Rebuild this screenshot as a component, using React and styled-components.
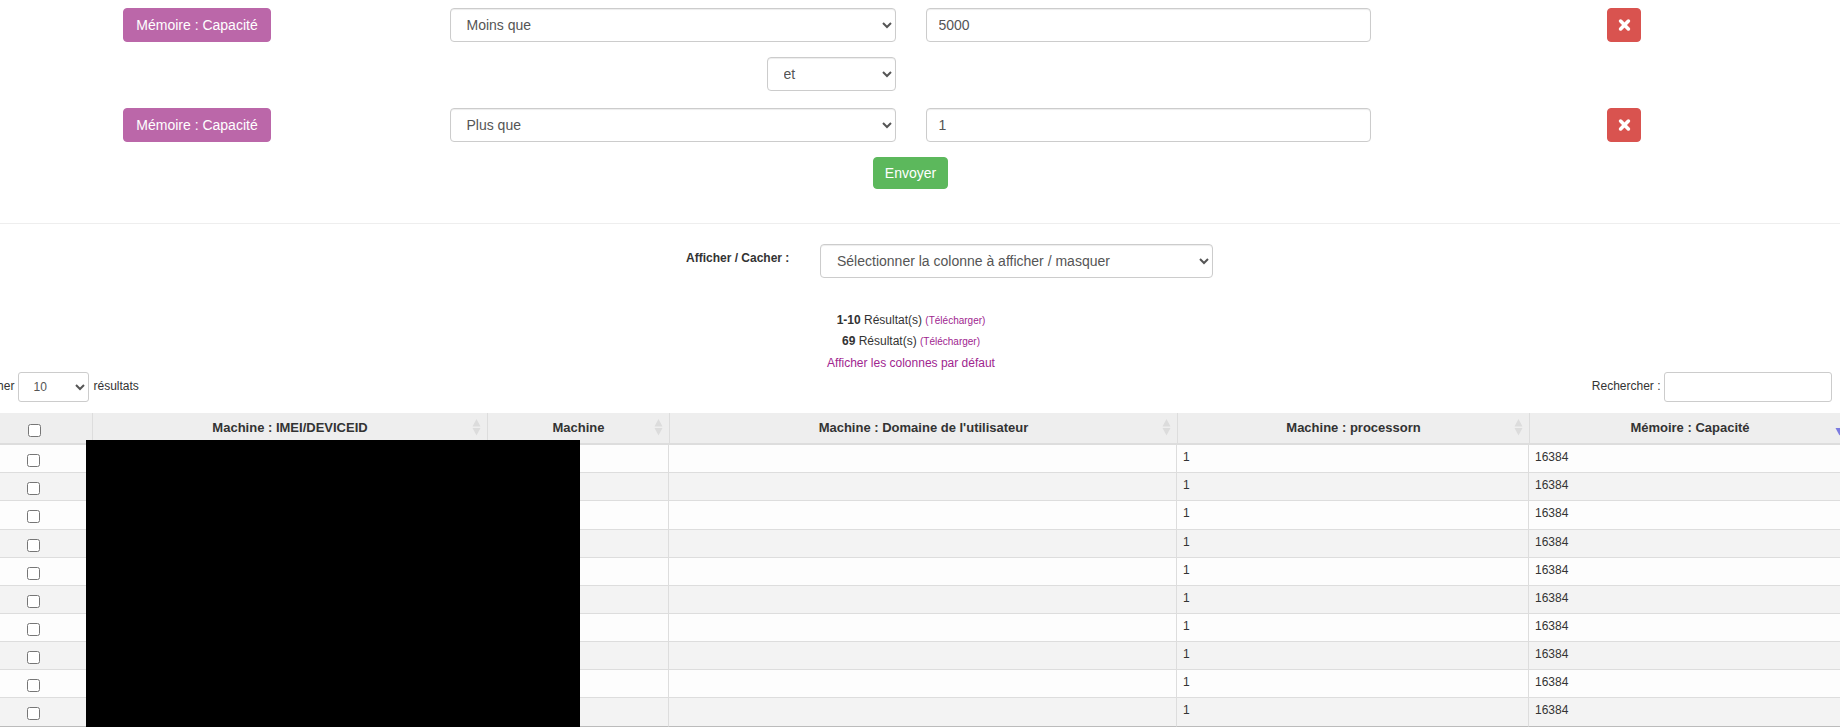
import React from "react"
import styled, { createGlobalStyle } from "styled-components"

const GlobalStyle = createGlobalStyle`
    html, body {
        margin: 0;
        padding: 0;
        background: #fff;
        overflow: hidden;
    }
    body {
        font-family: "Liberation Sans", Arial, sans-serif;
        font-size: 12px;
        line-height: 1.42857;
        color: #333;
    }
`;
const Page = styled.div`
    width: 1840px;
    height: 727px;
    overflow: hidden;
`;
const FilterForm = styled.form`
    display: flex;
    flex-direction: column;
    padding: 8px 0 0 123px;
`;
const FilterRow = styled.div`
    display: grid;
    grid-template-columns: 296.5px 446px 445px 176.5px 34px;
    column-gap: 30px;
    margin-bottom: ${(props) => props.$gap}px;
`;
const FieldButton = styled.button`
    justify-self: start;
    width: 148px;
    height: 34px;
    padding: 6px 0;
    font: 14px "Liberation Sans", Arial, sans-serif;
    color: #fff;
    background: #bb67a9;
    border: 1px solid #bb67a9;
    border-radius: 4px;
`;
const Select = styled.select`
    width: ${(props) => props.$width || "100%"};
    height: 34px;
    padding: 6px 12px;
    font: 14px "Liberation Sans", Arial, sans-serif;
    color: #555;
    background: #fff;
    border: 1px solid #ccc;
    border-radius: 4px;
    box-shadow: inset 0 1px 1px rgba(0, 0, 0, 0.075);
    box-sizing: border-box;
`;
const LinkSelect = styled(Select)`
    grid-column: 2;
    justify-self: end;
`;
const TextInput = styled.input`
    width: 100%;
    height: 34px;
    padding: 6px 12px;
    font: 14px "Liberation Sans", Arial, sans-serif;
    color: #555;
    background: #fff;
    border: 1px solid #ccc;
    border-radius: 4px;
    box-shadow: inset 0 1px 1px rgba(0, 0, 0, 0.075);
    box-sizing: border-box;
`;
const DeleteButton = styled.button`
    grid-column: 5;
    display: flex;
    align-items: center;
    justify-content: center;
    width: 34px;
    height: 34px;
    padding: 0;
    background: #d9534f;
    border: 1px solid #d9534f;
    border-radius: 4px;
`;
const SubmitRow = styled.div`
    display: flex;
    justify-content: center;
    margin-left: -123px;
    padding-right: 19px;
`;
const SubmitButton = styled.button`
    width: 75px;
    height: 32px;
    padding: 5px 0;
    font: 14px "Liberation Sans", Arial, sans-serif;
    color: #fff;
    background: #5cb85c;
    border: 1px solid #5cb85c;
    border-radius: 4px;
`;
const Divider = styled.hr`
    margin: 34px 0 20px;
    border: 0;
    border-top: 1px solid #eee;
`;
const ColumnPicker = styled.div`
    display: flex;
    align-items: flex-start;
    padding-left: 686px;
`;
const PickerLabel = styled.label`
    width: 134px;
    padding-top: 6px;
    font-weight: 700;
    font-size: 12px;
`;
const Summary = styled.div`
    display: flex;
    flex-direction: column;
    align-items: center;
    margin: 32px 0 -2px;
    padding-right: 18px;
    line-height: 21.33px;
`;
const Download = styled.a`
    font-size: 10px;
    color: #a0258f;
`;
const ResetLink = styled.a`
    color: #a0258f;
`;
const TableBlock = styled.div`
    position: relative;
    width: 1874px;
    margin-left: -24px;
`;
const TableTools = styled.div`
    display: flex;
    justify-content: space-between;
    align-items: center;
    height: 30px;
    margin-bottom: 11px;
    padding-right: 18.5px;
`;
const LengthControl = styled.label`
    display: flex;
    align-items: center;
    gap: 4px;
    margin-left: -2px;
`;
const SmallSelect = styled.select`
    width: 71px;
    height: 30px;
    padding: 5px 10px;
    font: 12px "Liberation Sans", Arial, sans-serif;
    color: #555;
    background: #fff;
    border: 1px solid #ccc;
    border-radius: 3px;
    box-sizing: border-box;
`;
const SearchControl = styled.label`
    display: flex;
    align-items: center;
    gap: 3px;
`;
const SearchInput = styled.input`
    width: 168px;
    height: 30px;
    padding: 5px 10px;
    background: #fff;
    border: 1px solid #ccc;
    border-radius: 3px;
    box-sizing: border-box;
`;
const Table = styled.table`
    width: 1874px;
    table-layout: fixed;
    border-collapse: separate;
    border-spacing: 0;
    font-size: 12px;
`;
const Th = styled.th`
    position: relative;
    padding: 6px 6px 7px;
    font-size: 13px;
    line-height: 17.14px;
    font-weight: 700;
    text-align: center;
    background: #eee;
    border-bottom: 2px solid #ddd;
    border-left: ${(props) => (props.$first ? "0" : "1px solid #ddd")};
    vertical-align: top;
`;
const Row = styled.tr`
    background: ${(props) => (props.$odd ? "#fdfdfd" : "#f3f3f3")};
`;
const Td = styled.td`
    padding: 4px 6px 6px;
    border-bottom: 1px solid ${(props) => (props.$last ? "#bbb" : "#ddd")};
    border-right: 1px solid #ddd;
    vertical-align: top;
`;
const Check = styled.input`
    display: block;
    width: 13px;
    height: 13px;
    margin: 5px auto -1px;
`;
const SortIcon = styled.svg`
    position: absolute;
    right: 6px;
    top: 6px;
`;
const Redacted = styled.div`
    position: absolute;
    left: 110px;
    top: 68px;
    width: 494px;
    height: 287px;
    background: #000;
`;

const columns = [
    { title: "Machine : IMEI/DEVICEID", width: 395 },
    { title: "Machine", width: 182 },
    { title: "Machine : Domaine de l'utilisateur", width: 508 },
    { title: "Machine : processorn", width: 352 },
    { title: "Mémoire : Capacité", width: 321, sorted: true },
];

const rows = [...Array(10).keys()];

const CloseIcon = () => (
    <svg width="13" height="14" viewBox="0 0 13 14">
        <path d="M2.6 3.1 L10.4 10.9 M10.4 3.1 L2.6 10.9" stroke="#fff" strokeWidth="3.6" strokeLinecap="round" />
    </svg>
);

const SortBoth = () => (
    <SortIcon width="9" height="17" viewBox="0 0 9 17">
        <path d="M4.5 0 L8.5 7.5 L0.5 7.5 Z M0.5 9 L8.5 9 L4.5 16.5 Z" fill="#dcdcdc" />
    </SortIcon>
);

const SortDown = () => (
    <SortIcon width="9" height="17" viewBox="0 0 9 17">
        <path d="M0.5 9 L8.5 9 L4.5 16.5 Z" fill="#7b7be0" />
    </SortIcon>
);

const Filter = ({ operator, value }) => (
    <FilterRow $gap={15}>
        <FieldButton type="button">Mémoire : Capacité</FieldButton>
        <Select defaultValue={operator}>
            <option>Moins que</option>
            <option>Plus que</option>
        </Select>
        <TextInput defaultValue={value} />
        <DeleteButton type="button" aria-label="Supprimer"><CloseIcon /></DeleteButton>
    </FilterRow>
);

const App = () => {
    return (
        <Page>
            <GlobalStyle />
            <FilterForm>
                <Filter operator="Moins que" value="5000" />
                <FilterRow $gap={17}>
                    <LinkSelect $width="129px">
                        <option>et</option>
                        <option>ou</option>
                    </LinkSelect>
                </FilterRow>
                <Filter operator="Plus que" value="1" />
                <SubmitRow>
                    <SubmitButton type="button">Envoyer</SubmitButton>
                </SubmitRow>
            </FilterForm>
            <Divider />
            <ColumnPicker>
                <PickerLabel>Afficher / Cacher :</PickerLabel>
                <Select $width="393px">
                    <option>Sélectionner la colonne à afficher / masquer</option>
                </Select>
            </ColumnPicker>
            <Summary>
                <div><b>1-10</b> Résultat(s) <Download>(Télécharger)</Download></div>
                <div><b>69</b> Résultat(s) <Download>(Télécharger)</Download></div>
                <ResetLink>Afficher les colonnes par défaut</ResetLink>
            </Summary>
            <TableBlock>
                <TableTools>
                    <LengthControl>
                        Afficher
                        <SmallSelect>
                            <option>10</option>
                        </SmallSelect>
                        résultats
                    </LengthControl>
                    <SearchControl>
                        Rechercher :
                        <SearchInput />
                    </SearchControl>
                </TableTools>
                <Table>
                    <colgroup>
                        <col width="116" />
                        {columns.map((col) => <col key={col.title} width={col.width} />)}
                    </colgroup>
                    <thead>
                        <tr>
                            <Th $first><Check type="checkbox" /></Th>
                            {columns.map((col) => (
                                <Th key={col.title}>
                                    {col.title}
                                    {col.sorted ? <SortDown /> : <SortBoth />}
                                </Th>
                            ))}
                        </tr>
                    </thead>
                    <tbody>
                        {rows.map((i) => (
                            <Row key={i} $odd={i % 2 === 0}>
                                <Td $last={i === 9}><Check type="checkbox" /></Td>
                                <Td $last={i === 9} />
                                <Td $last={i === 9} />
                                <Td $last={i === 9} />
                                <Td $last={i === 9}>1</Td>
                                <Td $last={i === 9}>16384</Td>
                            </Row>
                        ))}
                    </tbody>
                </Table>
                <Redacted />
            </TableBlock>
        </Page>
    )
}
export default App
